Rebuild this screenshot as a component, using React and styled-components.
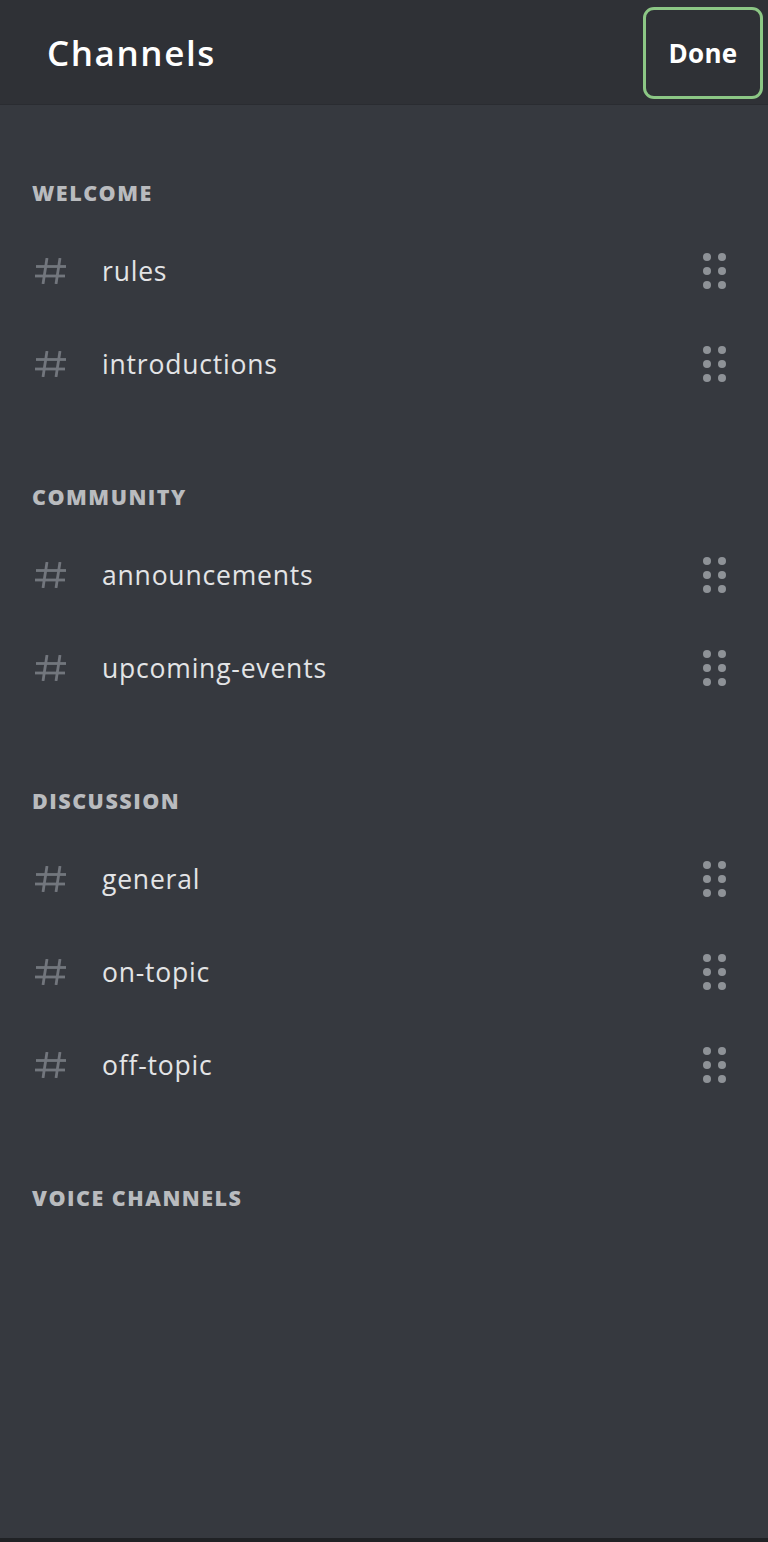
import React from 'react'
import styled, { createGlobalStyle } from 'styled-components'

const GlobalStyle = createGlobalStyle`
  html, body {
    margin: 0;
    padding: 0;
    background: #36393f;
  }
  * {
    box-sizing: border-box;
  }
`

const Page = styled.div`
  width: 768px;
  height: 1542px;
  display: flex;
  flex-direction: column;
  background: #36393f;
  font-family: "Open Sans", "Noto Sans", sans-serif;
  overflow: hidden;
  border-bottom: 4px solid #202225;
`
const Header = styled.header`
  height: 105px;
  flex-shrink: 0;
  display: flex;
  align-items: center;
  justify-content: space-between;
  padding: 0 5px 0 47px;
  background: #2f3136;
  border-bottom: 1px solid #2a2c31;
`
const Title = styled.h1`
  margin: 0;
  color: #ffffff;
  font-size: 35px;
  font-weight: 600;
  letter-spacing: 1.6px;
`
const DoneButton = styled.button`
  width: 120px;
  height: 92px;
  margin-top: 2px;
  border: 3px solid #8cc785;
  border-radius: 11px;
  background: transparent;
  color: #ffffff;
  font-family: inherit;
  font-size: 26px;
  font-weight: 700;
  letter-spacing: 0.3px;
  cursor: pointer;
`
const List = styled.main`
  flex: 1;
  display: flex;
  flex-direction: column;
  gap: 75px;
  padding-top: 76px;
`
const Section = styled.section`
  display: flex;
  flex-direction: column;
`
const SectionLabel = styled.h2`
  margin: 0 0 19px 32px;
  height: 24px;
  line-height: 24px;
  color: #b9bbbe;
  font-size: 21.5px;
  font-weight: 800;
  letter-spacing: 1.5px;
`
const Row = styled.div`
  height: 93px;
  display: flex;
  align-items: center;
  padding: 0 42px 0 35px;
`
const ChannelName = styled.span`
  flex: 1;
  margin-left: 35px;
  color: #e3e4e6;
  font-size: 26.5px;
  font-weight: 400;
  letter-spacing: 0.8px;
`
const Handle = styled.div`
  display: grid;
  grid-template-columns: repeat(2, 8px);
  grid-template-rows: repeat(3, 8px);
  column-gap: 7px;
  row-gap: 6px;
`
const Dot = styled.span`
  width: 8px;
  height: 8px;
  border-radius: 50%;
  background: #8e9297;
`

const HashIcon = () => (
  <svg width="32" height="26" viewBox="0 0 32 26" fill="none" stroke="#72767d" strokeWidth="2.8">
    <path d="M12 0 L8 26" />
    <path d="M25 0 L21 26" />
    <path d="M1 8.5 H31" />
    <path d="M0 18 H30" />
  </svg>
)

const sections = [
  { name: 'WELCOME', channels: ['rules', 'introductions'] },
  { name: 'COMMUNITY', channels: ['announcements', 'upcoming-events'] },
  { name: 'DISCUSSION', channels: ['general', 'on-topic', 'off-topic'] },
  { name: 'VOICE CHANNELS', channels: [] }
]

const App = () => {
  return (
    <Page>
      <GlobalStyle />
      <Header>
        <Title>Channels</Title>
        <DoneButton>Done</DoneButton>
      </Header>
      <List>
        {sections.map(section => (
          <Section key={section.name}>
            <SectionLabel>{section.name}</SectionLabel>
            {section.channels.map(channel => (
              <Row key={channel}>
                <HashIcon />
                <ChannelName>{channel}</ChannelName>
                <Handle>
                  {[0, 1, 2, 3, 4, 5].map(i => <Dot key={i} />)}
                </Handle>
              </Row>
            ))}
          </Section>
        ))}
      </List>
    </Page>
  )
}

export default App
